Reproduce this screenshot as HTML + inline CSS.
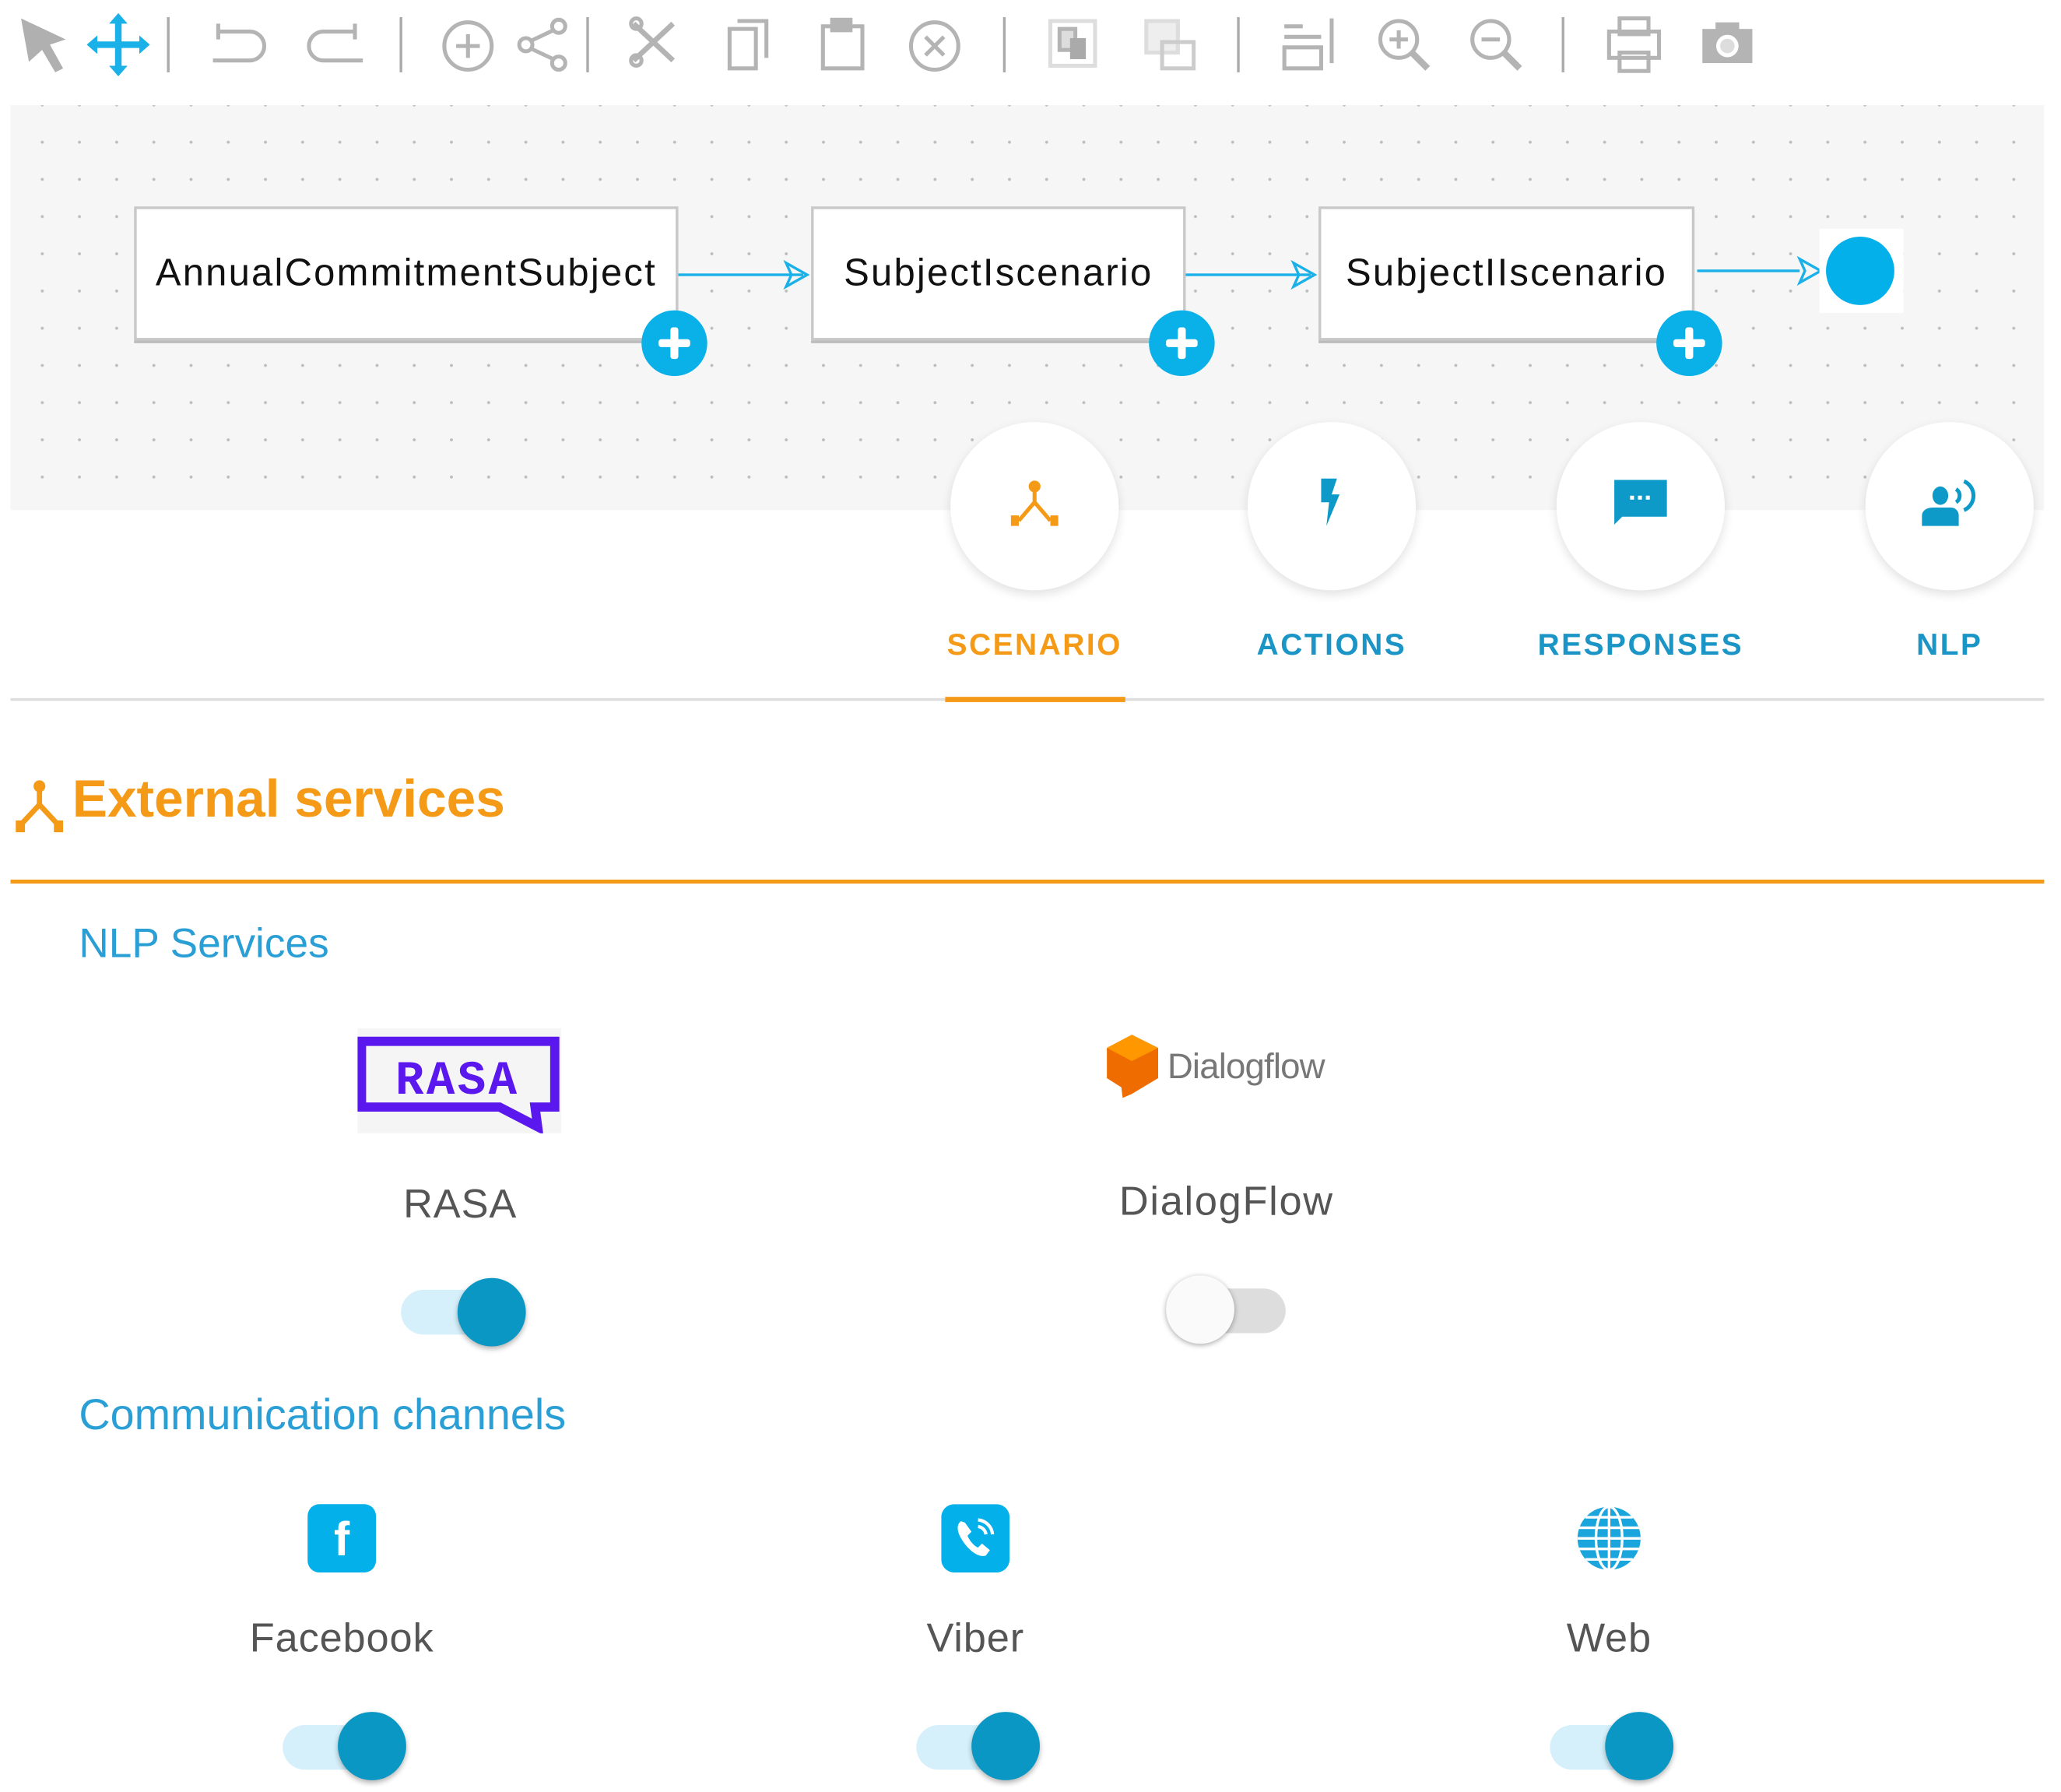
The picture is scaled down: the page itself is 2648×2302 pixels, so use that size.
<!DOCTYPE html>
<html><head><meta charset="utf-8"><style>
html,body{margin:0;padding:0;background:#fff;width:2648px;height:2302px;overflow:hidden}
#w{position:absolute;left:0;top:0;width:1570px;height:1363px;transform:scale(1.689);transform-origin:0 0;font-family:"Liberation Sans",sans-serif}
.a{position:absolute}
.canvas{left:8px;top:80px;width:1547px;height:308px;background-color:#f6f6f6;background-image:radial-gradient(circle,#bdbdbd 1px,transparent 1.3px);background-size:28.3px 28.3px;background-position:10px 14px}
.box{background:#fff;border:2px solid #c8c8c8;height:102px;top:157px;display:flex;align-items:center;justify-content:center;font-size:29px;letter-spacing:1.3px;color:#111;box-sizing:border-box;box-shadow:0 2px 0 #bbb;white-space:nowrap}
.plus{width:50px;height:50px;border-radius:50%;background:#0ab0e8;color:#fff;top:236px}
.plus:before{content:"";position:absolute;left:13px;top:22px;width:24px;height:6px;background:#fff;border-radius:2px}
.plus:after{content:"";position:absolute;left:22px;top:13px;width:6px;height:24px;background:#fff;border-radius:2px}
.arr{height:2px;background:#1ab0e8;top:208px}
.tab{width:128px;height:128px;border-radius:50%;background:#fff;top:321px;box-shadow:0 3px 8px rgba(0,0,0,.12)}
.tl{top:477px;font-size:23px;font-weight:bold;letter-spacing:1.5px;color:#1a95c6;text-align:center;width:200px}
.sep{width:2px;height:42px;background:#aaa;top:13px}
.sub{color:#2a9fd6}
.lbl{font-size:31px;color:#555;text-align:center;width:260px;letter-spacing:.5px}
.tr{width:90px;height:34px;border-radius:17px;background:#d5f0fb}
.kn{width:52px;height:52px;border-radius:50%;background:#0a97c4;box-shadow:0 2px 4px rgba(0,0,0,.3)}
</style></head><body><div id="w">
<svg class="a" style="left:0;top:0" width="1400" height="75" viewBox="0 0 1400 75" fill="none" stroke="#b4b4b4" stroke-width="3">
<path d="M16 14 L50 30 L38 34 L48 52 L42 55 L32 38 L22 47 Z" fill="#b0b0b0" stroke="none"/>
<g stroke="#1ab0e8" stroke-width="5"><path d="M90 14V54M70 34H110"/></g>
<path d="M90 10l-7 8h14zM90 58l-7-8h14zM66 34l8-7v14zM114 34l-8-7v14z" fill="#1ab0e8" stroke="none"/>
<path d="M166 24H190a10 10 0 0 1 0 22H162M166 18v12"/>
<path d="M270 24H246a10 10 0 0 0 0 22H276M270 18v12"/>
<circle cx="356" cy="35" r="18"/><path d="M356 26v18M347 35h18"/>
<circle cx="425" cy="20" r="5"/><circle cx="400" cy="34" r="5"/><circle cx="425" cy="48" r="5"/><path d="M404 31l17-8M404 37l17 8"/>
<path d="M482 18l30 28M512 18l-30 28" stroke-width="4"/><circle cx="484" cy="46" r="4"/><circle cx="484" cy="18" r="4"/>
<rect x="555" y="22" width="20" height="30"/><path d="M561 16h22v28"/>
<rect x="626" y="20" width="30" height="32"/><rect x="633" y="15" width="14" height="8" fill="#b4b4b4"/>
<circle cx="711" cy="35" r="18"/><path d="M704 28l14 14M718 28l-14 14"/>
<rect x="799" y="16" width="34" height="34" stroke="#ddd"/><rect x="806" y="22" width="12" height="16" fill="#ddd"/><rect x="814" y="29" width="12" height="16" fill="#aaa" stroke="none"/>
<rect x="872" y="16" width="24" height="24" stroke="#ddd" fill="#eee"/><rect x="884" y="32" width="24" height="20" stroke="#ccc"/>
<path d="M977 20h14M977 28h28M977 36h28v16h-28zM1013 14v34"/>
<circle cx="1064" cy="30" r="14"/><path d="M1074 40l12 12" stroke-width="5"/><path d="M1064 23v14M1057 30h14"/>
<circle cx="1134" cy="30" r="14"/><path d="M1144 40l12 12" stroke-width="5"/><path d="M1127 30h14"/>
<rect x="1232" y="14" width="22" height="12"/><rect x="1224" y="24" width="38" height="20"/><rect x="1232" y="40" width="22" height="14"/>
<rect x="1295" y="22" width="38" height="26" fill="#b4b4b4" stroke="none"/><rect x="1305" y="17" width="18" height="7" fill="#b4b4b4" stroke="none"/><circle cx="1314" cy="35" r="7" stroke="#fff" fill="#ddd"/>
</svg>
<div class="a sep" style="left:127px"></div><div class="a sep" style="left:304px"></div><div class="a sep" style="left:446px"></div><div class="a sep" style="left:763px"></div><div class="a sep" style="left:941px"></div><div class="a sep" style="left:1188px"></div>
<div class="a canvas"></div>
<div class="a box" style="left:102px;width:414px">AnnualCommitmentSubject</div>
<div class="a box" style="left:617px;width:285px">SubjectIscenario</div>
<div class="a box" style="left:1003px;width:286px">SubjectIIscenario</div>
<div class="a arr" style="left:516px;width:95px"></div>
<div class="a arr" style="left:902px;width:95px"></div>
<div class="a arr" style="left:1291px;top:205px;width:78px"></div>
<svg class="a" style="left:0;top:0" width="1560" height="300" fill="none" stroke="#1ab0e8" stroke-width="2"><path d="M598 200l16 9-16 9l4-9z"/><path d="M984 200l16 9-16 9l4-9z"/><path d="M1369 197l16 9-16 9l4-9z"/></svg>
<div class="a" style="left:1384px;top:174px;width:64px;height:64px;background:#fff"></div>
<div class="a" style="left:1389px;top:180px;width:52px;height:52px;border-radius:50%;background:#04b0ea"></div>
<div class="a plus" style="left:488px"></div><div class="a plus" style="left:874px"></div><div class="a plus" style="left:1260px"></div>
<div class="a tab" style="left:723px"></div><div class="a tab" style="left:949px"></div><div class="a tab" style="left:1184px"></div><div class="a tab" style="left:1419px"></div>
<svg class="a" style="left:0;top:0" width="1560" height="420">
<g fill="#f59a16" stroke="#f59a16"><circle cx="787" cy="370" r="4"/><path d="M787 372v10M787 382l-12 14M787 382l12 14" stroke-width="3" fill="none"/><rect x="769" y="392" width="6" height="8" stroke="none"/><rect x="799" y="392" width="6" height="8" stroke="none"/></g>
<path d="M1005 364h12l-4 12h6l-10 24 2-18h-6z" fill="#0d9ac8"/>
<path d="M1228 365h40v28h-34l-6 6z" fill="#0d9ac8"/><g fill="#fff"><rect x="1240" y="377" width="3" height="3"/><rect x="1246" y="377" width="3" height="3"/><rect x="1252" y="377" width="3" height="3"/></g>
<g fill="#0d9ac8"><ellipse cx="1476" cy="377" rx="6" ry="7"/><path d="M1462 400v-8a8 6 0 0 1 8-6h14a6 6 0 0 1 6 6v8z"/></g>
<path d="M1488 372a6 6 0 0 1 0 10M1494 366a12 12 0 0 1 0 22" stroke="#0d9ac8" stroke-width="3" fill="none"/>
</svg>
<div class="a tl" style="left:687px;color:#f59a16">SCENARIO</div>
<div class="a tl" style="left:913px">ACTIONS</div>
<div class="a tl" style="left:1148px">RESPONSES</div>
<div class="a tl" style="left:1383px">NLP</div>
<div class="a" style="left:8px;top:531px;width:1547px;height:2px;background:#ddd"></div>
<div class="a" style="left:719px;top:530px;width:137px;height:4px;background:#f59a16"></div>
<svg class="a" style="left:10px;top:592px" width="40" height="42"><g fill="#f59a16" stroke="#f59a16"><circle cx="20" cy="6" r="4"/><path d="M20 8v12M20 20l-13 14M20 20l13 14" stroke-width="4" fill="none"/><rect x="2" y="32" width="7" height="9" stroke="none"/><rect x="31" y="32" width="7" height="9" stroke="none"/></g></svg>
<div class="a" style="left:55px;top:586px;font-size:40px;font-weight:bold;color:#f59a16;white-space:nowrap">External services</div>
<div class="a" style="left:8px;top:669px;width:1547px;height:3px;background:#f59a16"></div>
<div class="a sub" style="left:60px;top:699px;font-size:31.5px;white-space:nowrap">NLP Services</div>
<svg class="a" style="left:272px;top:782px" width="155" height="80"><rect width="155" height="80" fill="#f5f5f5"/><path d="M3 10H150V60H135L137 75 108 60H3Z" fill="none" stroke="#5a17ee" stroke-width="7"/><text x="76" y="50" text-anchor="middle" font-family="Liberation Mono" font-weight="bold" font-size="36" fill="#5a17ee" letter-spacing="2">RASA</text></svg>
<div class="a lbl" style="left:220px;top:898px">RASA</div>
<div class="a tr" style="left:305px;top:981px"></div><div class="a kn" style="left:348px;top:972px"></div>
<svg class="a" style="left:840px;top:785px" width="50" height="55"><path d="M21 2L41 12V35L21 47 14 50 13 42 2 35V12Z" fill="#ef6c00"/><path d="M21 2L41 12 21 22 2 12Z" fill="#ff9800"/></svg>
<div class="a" style="left:888px;top:796px;font-size:27px;color:#777;letter-spacing:-.5px">Dialogflow</div>
<div class="a lbl" style="left:803px;top:896px;letter-spacing:1px">DialogFlow</div>
<div class="a tr" style="left:890px;top:980px;width:88px;background:#ddd"></div><div class="a kn" style="left:887px;top:970px;background:#fafafa;box-shadow:0 1px 4px rgba(0,0,0,.35)"></div>
<div class="a sub" style="left:60px;top:1057px;font-size:33px;white-space:nowrap">Communication channels</div>
<div class="a" style="left:234px;top:1144px;width:52px;height:52px;border-radius:9px;background:#04b0ea;color:#fff;font-weight:bold;font-size:36px;text-align:center;line-height:54px">f</div>
<svg class="a" style="left:716px;top:1144px" width="52" height="52"><rect width="52" height="52" rx="10" fill="#04b0ea"/><path d="M15 13c-4 3-3 9 2 16s12 12 17 10l3-4-6-5-3 3c-3-1-7-6-8-9l3-3-5-7z" fill="#fff"/><path d="M28 12a12 12 0 0 1 11 11M28 17a7 7 0 0 1 6 6" stroke="#fff" stroke-width="2.5" fill="none"/></svg>
<svg class="a" style="left:1198px;top:1144px" width="52" height="52" fill="none"><circle cx="26" cy="26" r="24" fill="#1aa5dc"/><g stroke="#fff" stroke-width="2"><ellipse cx="26" cy="26" rx="10" ry="24"/><path d="M26 2v48M3 18h46M2 26h48M3 34h46M8 10h36M8 42h36"/></g></svg>
<div class="a lbl" style="left:130px;top:1228px">Facebook</div>
<div class="a lbl" style="left:612px;top:1228px">Viber</div>
<div class="a lbl" style="left:1094px;top:1228px">Web</div>
<div class="a tr" style="left:215px;top:1312px"></div><div class="a kn" style="left:257px;top:1302px"></div>
<div class="a tr" style="left:697px;top:1312px"></div><div class="a kn" style="left:739px;top:1302px"></div>
<div class="a tr" style="left:1179px;top:1312px"></div><div class="a kn" style="left:1221px;top:1302px"></div>
</div></body></html>
